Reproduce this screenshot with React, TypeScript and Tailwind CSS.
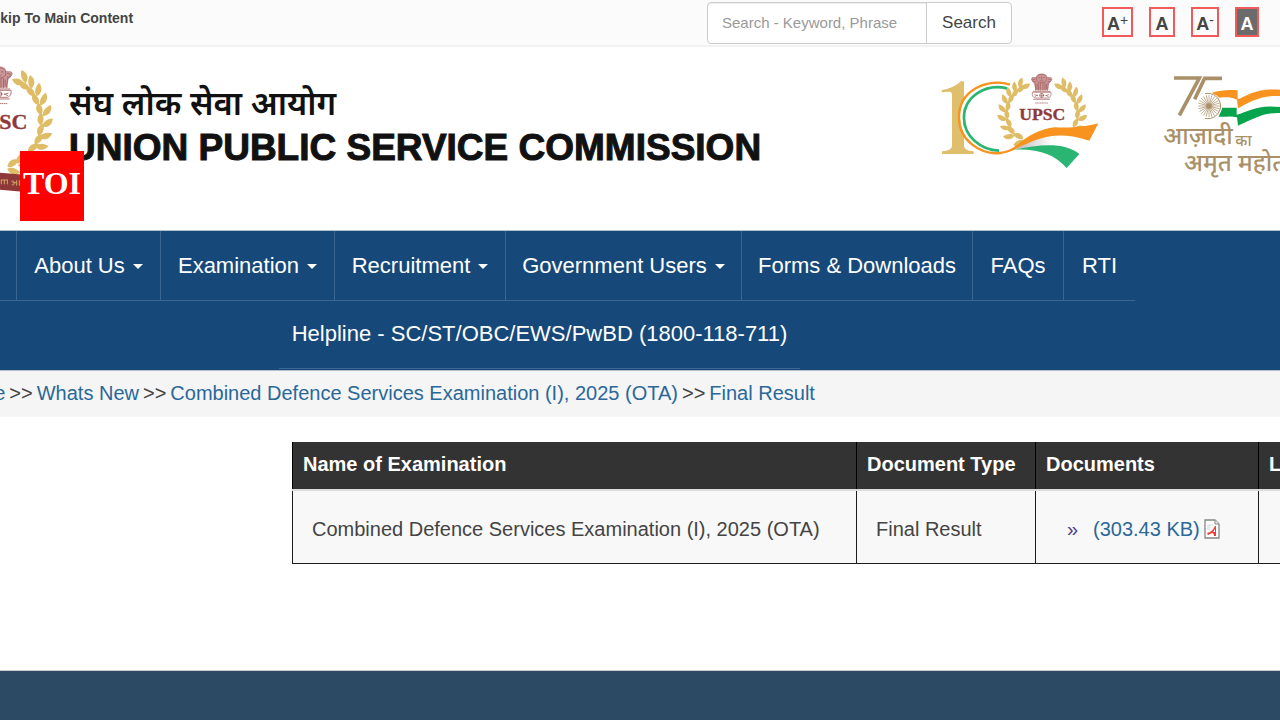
const navItems = [
  { label: "About Us", menu: true, width: "w-36" },
  { label: "Examination", menu: true, width: "w-[174px]" },
  { label: "Recruitment", menu: true, width: "w-[171px]" },
  { label: "Government Users", menu: true, width: "w-[236px]" },
  { label: "Forms & Downloads", menu: false, width: "w-[231px]" },
  { label: "FAQs", menu: false, width: "w-[91px]" },
  { label: "RTI", menu: false, width: "w-[72px]" },
];

// x, y, rotation of each pair of leaves
const mainLeaves = [
  [64, 74, -42],
  [83, 88, -28],
  [103, 108, -14],
  [118, 134, 0],
  [129, 166, 14],
  [131, 199, 30],
  [128, 234, 48],
  [119, 264, 66],
  [99, 290, 80],
  [66, 320, 60],
  [38, 336, 84],
];

const centenaryLeaves = [
  [424, 90, -36],
  [440, 100, -18],
  [457, 114, -8],
  [469, 133, 4],
  [477, 158, 20],
  [479, 184, 38],
  [471, 211, 54],
];

const centenaryLeavesLower = [
  [462, 235, 72],
  [436, 253, 92],
];

function Leaves({ items, size }: { items: number[][]; size: number }) {
  return (
    <g fill="#dfbd67">
      {items.map(([x, y, angle]) => (
        <g
          key={`${x}-${y}`}
          transform={`translate(${x} ${y}) rotate(${angle}) scale(${size})`}
        >
          <path d="M-1 11 C-16 8 -18 -4 -14 -14 C-5 -10 2 -2 -1 11Z" />
          <path d="M2 12 C-1 0 5 -9 14 -15 C20 -3 15 9 2 12Z" />
        </g>
      ))}
    </g>
  );
}

function Lions() {
  return (
    <g fill="none" stroke="#a25b5b" strokeWidth="2" strokeLinecap="round">
      <path
        d="M-16 4 C-15 -9 15 -9 16 4 L28 6 C33 14 26 22 22 25 L19 45 H-19 L-22 25 C-28 20 -33 13 -28 6Z"
        fill="#c99797"
        stroke="none"
      />
      <path d="M-13 2 C-10 -5 10 -5 13 2 M-15 5 C-18 18 -8 22 0 22 C8 22 18 18 15 5 M-8 7 h3 M5 7 h3 M0 5 v7 M-5 15 C-2 18 2 18 5 15" />
      <path d="M-28 7 C-35 12 -27 22 -19 19 M28 7 C35 12 27 22 19 19 M-27 13 l7 -2 M27 13 l-7 -2 M-20 22 C-20 30 -17 36 -18 45 M20 22 C20 30 17 36 18 45" />
      <path d="M-10 23 C-12 30 -8 36 -10 45 M10 23 C12 30 8 36 10 45 M-4 24 V45 M4 24 V45 M-14 27 v14 M14 27 v14" />
      <path d="M-25 48 H25 M-28 52 C-30 61 -25 66 -20 68 H20 C25 66 30 61 28 52Z M-24 72 H24" />
      <circle cx="0" cy="60" r="6" />
      <path d="M-6 60 H6 M0 54 V66 M-21 58 l9 3 M-20 64 l7 -5 M12 61 l9 -3 M13 60 l7 4" />
      <path d="M-19 83 H19" strokeDasharray="2 3" />
    </g>
  );
}

function MainEmblem() {
  return (
    <svg
      className="mt-2 h-[150px] w-[53px] shrink-0"
      viewBox="0 0 159 450"
      aria-hidden="true"
    >
      <g transform="translate(-2 42) scale(1.25)">
        <Lions />
      </g>
      <Leaves items={mainLeaves} size={1.4} />
      <text
        x="82"
        y="223"
        textAnchor="end"
        fontFamily="Liberation Serif, serif"
        fontWeight="700"
        fontSize="66"
        fill="#8d3939"
        stroke="#8d3939"
      >
        UPSC
      </text>
      <path d="M0 353 L110 362 V414 L0 404Z" fill="#8d3939" />
      <path
        d="M2 375 h22 M4 375 v13 M13 375 v13 M22 375 v13 M34 379 c8 -4 10 3 4 4 c8 0 6 9 -3 6 M42 383 h8 M50 376 v16 M58 376 v16"
        fill="none"
        stroke="#d6a663"
        strokeWidth="3"
      />
    </svg>
  );
}

function CentenaryLogo() {
  return (
    <svg
      className="h-[130px] w-[200px]"
      viewBox="0 0 600 390"
      role="img"
      aria-label="UPSC 100"
    >
      <defs>
        <linearGradient id="fold" x1="0" x2="1">
          <stop offset="0" stopColor="#b9b9b9" />
          <stop offset="0.5" stopColor="#ffffff" />
        </linearGradient>
      </defs>
      <path
        d="M132 79 V272 Q132 286 161 289 V297 H66 V289 Q96 286 96 272 V119 Q96 109 86 110 L65 112 V105 C90 102 110 91 122 79Z"
        fill="#dfbf6b"
      />
      <Leaves items={centenaryLeaves} size={1.1} />
      <g transform="translate(733 0) scale(-1 1)">
        <Leaves items={centenaryLeaves} size={1.1} />
        <Leaves items={centenaryLeavesLower} size={1.2} />
      </g>
      <g transform="translate(365 61)">
        <Lions />
      </g>
      <text
        x="367"
        y="195"
        textAnchor="middle"
        fontFamily="Liberation Serif, serif"
        fontWeight="700"
        fontSize="53"
        fill="#8d3939"
        stroke="#8d3939"
      >
        UPSC
      </text>
      <path
        d="M266 94 C201 76 124 105 124 188 C124 250 182 293 239 290"
        fill="none"
        stroke="#ffffff"
        strokeWidth="8"
      />
      <path
        d="M270 89 C205 67 116 105 117 188 C117 255 180 300 240 294 C267 291 282 281 310 265"
        fill="none"
        stroke="#f7931e"
        strokeWidth="7"
      />
      <path
        d="M261 100 C197 84 132 125 132 188 C132 245 183 285 237 287"
        fill="none"
        stroke="#2bb573"
        strokeWidth="8"
      />
      <path d="M285 284 Q350 235 430 239 L508 256 L480 286 Q400 262 285 284Z" fill="url(#fold)" />
      <path
        d="M270 288 C310 252 350 222 405 217 C455 220 500 214 535 205 L508 257 C465 243 425 238 390 244 C345 252 315 270 270 288Z"
        fill="#f7931e"
      />
      <path
        d="M283 284 C350 270 432 258 478 297 L440 339 C405 300 360 281 283 284Z"
        fill="#2bb573"
      />
    </svg>
  );
}

function AmritLogo() {
  const spokes = Array.from({ length: 24 }, (_, i) => i * 15);
  return (
    <svg
      className="mt-[5px] h-[130px] w-[140px]"
      viewBox="0 0 420 390"
      role="img"
      aria-label="आज़ादी का अमृत महोत्सव"
    >
      <path
        d="M102 54 H178 L118 166 M246 55 H194 L164 118"
        fill="none"
        stroke="#a99068"
        strokeWidth="11"
      />
      <path
        d="M216 98 C242 90 268 88 293 91 V118 C326 105 348 84 420 89 V108 C360 105 325 129 294 145 L291 119 C268 108 246 112 228 115Z"
        fill="#f7931e"
      />
      <path
        d="M247 143 H290 V164 C326 155 350 133 420 141 V159 C365 157 328 184 294 197 L291 172 C270 166 253 172 236 170Z"
        fill="#07a44b"
      />
      <circle cx="207" cy="138" r="39" fill="#ffffff" />
      <path
        d="M195 101 A38 38 0 1 1 195 175"
        fill="none"
        stroke="#a99068"
        strokeWidth="3"
      />
      <g stroke="#a99068" strokeWidth="2">
        {spokes.map((angle) => (
          <path key={angle} d="M207 134 V105" transform={`rotate(${angle} 207 138)`} />
        ))}
      </g>
      <circle cx="207" cy="138" r="8" fill="#a99068" />
      <g fill="#a99068" fontFamily="Noto Sans, sans-serif" fontWeight="500">
        <text x="70" y="252" fontSize="72">आज़ादी</text>
        <text x="286" y="259" fontSize="46">का</text>
        <text x="132" y="332" fontSize="72">अमृत महोत्सव</text>
      </g>
    </svg>
  );
}

function PdfIcon() {
  return (
    <svg className="size-5 shrink-0" viewBox="0 0 20 20" aria-hidden="true">
      <path d="M1 1 H11 L15 5 V19 H1Z" fill="#fff" stroke="#858585" strokeWidth="1.3" />
      <path d="M11 1 V5 H15" fill="#eee" stroke="#858585" />
      <path d="M3 6 h6 M3 8 h4 M3 10 h3" stroke="#d5d5d5" />
      <path
        d="M3 14 L6 13 C9 11 10 9 11 7 L12 7 V17 L10 17 C10 15 9 14 8 14 L4 16Z"
        fill="#ef3b3b"
      />
      <path d="M9 13 L11 10 V13Z" fill="#fff" />
    </svg>
  );
}

function TopBar() {
  const sizeButton =
    "flex h-[30px] justify-center border-2 border-[#f05a5a] pt-px text-lg leading-7 font-bold";
  return (
    <div className="flex h-[47px] items-start justify-between border-b-2 border-[#f2f2f2] bg-[#fbfbfb]">
      <a href="#content" className="-ml-[9px] pt-2 text-sm leading-5 font-bold whitespace-nowrap">
        Skip To Main Content
      </a>
      <div className="flex pr-[21px]">
        <form className="mt-0.5 mr-[90px] flex h-[42px] rounded border border-[#ccc] bg-white">
          <input
            type="text"
            aria-label="Search"
            placeholder="Search - Keyword, Phrase"
            className="w-[218px] rounded-l pl-3.5 text-[15px] shadow-[inset_0_1px_1px_#00000013] outline-none placeholder:text-[#999]"
          />
          <button
            type="button"
            className="w-[85px] border-l border-[#ccc] text-[17px]"
          >
            Search
          </button>
        </form>
        <div className="flex items-start gap-4 pt-[7px]">
          <button type="button" className={`w-[31px] ${sizeButton}`}>
            A<span className="text-sm leading-5 font-normal">+</span>
          </button>
          <button type="button" className={`w-[26px] ${sizeButton}`}>
            A
          </button>
          <button type="button" className={`w-7 ${sizeButton}`}>
            A<span className="text-sm leading-5 font-normal">-</span>
          </button>
          <button type="button" className={`w-6 bg-[#6b6b6b] text-white ${sizeButton}`}>
            A
          </button>
        </div>
      </div>
    </div>
  );
}

function Header() {
  return (
    <header className="relative flex h-[183px] items-start">
      <MainEmblem />
      <div className="ml-4 pt-[34px] whitespace-nowrap text-[#111]">
        <p className="font-['Noto_Sans',sans-serif] text-[33px] leading-[44px] font-semibold">
          संघ लोक सेवा आयोग
        </p>
        <h1 className="text-[37px] leading-[46px] font-bold [-webkit-text-stroke:1px_#111]">
          UNION PUBLIC SERVICE COMMISSION
        </h1>
      </div>
      <div className="ml-auto flex gap-5 pt-2">
        <CentenaryLogo />
        <AmritLogo />
      </div>
      <div className="absolute top-[104px] left-5 flex h-[70px] w-16 items-center justify-center bg-[#ff0000] pb-1.5 font-['Liberation_Serif',serif] text-[32px] font-bold text-white">
        TOI
      </div>
    </header>
  );
}

function Nav() {
  return (
    <nav className="h-[141px] border-y border-[#b5bfca] bg-[#16497a] text-[22px] leading-8 text-white">
      <ul className="flex h-[70px]">
        <li className="w-4 border-b border-[#3b6691]"></li>
        {navItems.map((item) => (
          <li key={item.label} className={`shrink-0 border-b border-l border-[#3b6691] ${item.width}`}>
            <a href="#" className="flex items-center justify-center gap-2 pt-[19px] whitespace-nowrap">
              {item.label}
              {item.menu && (
                <span className="border-x-5 border-t-5 border-x-transparent border-t-white"></span>
              )}
            </a>
          </li>
        ))}
      </ul>
      <a
        href="#"
        className="ml-[279px] block h-[68px] w-[521px] border-b border-[#3b6691] pt-[17px] text-center whitespace-nowrap"
      >
        Helpline - SC/ST/OBC/EWS/PwBD (1800-118-711)
      </a>
    </nav>
  );
}

function Breadcrumb() {
  const link = "text-[#2a6899]";
  return (
    <div className="h-[46px] bg-[#f5f5f5]">
      <div className="-ml-12 flex gap-1 pt-1.5 text-xl leading-8 whitespace-nowrap">
        <a href="#" className={link}>Home</a>
        <span>&gt;&gt;</span>
        <a href="#" className={link}>Whats New</a>
        <span>&gt;&gt;</span>
        <a href="#" className={link}>Combined Defence Services Examination (I), 2025 (OTA)</a>
        <span>&gt;&gt;</span>
        <a href="#" className={link}>Final Result</a>
      </div>
    </div>
  );
}

function ResultTable() {
  const head = "h-12 border-x border-black pb-1 pl-2.5 text-left font-bold";
  const cell = "h-[73px] border border-t-2 border-[#1c1c1c] border-t-[#ddd] pt-1 pl-[19px]";
  return (
    <table className="mt-[25px] ml-[292px] w-[1190px] table-fixed border-collapse text-xl leading-7 whitespace-nowrap">
      <colgroup>
        <col className="w-[564px]" />
        <col className="w-[179px]" />
        <col className="w-[223px]" />
        <col />
      </colgroup>
      <thead className="bg-[#333] text-white">
        <tr>
          <th className={head}>Name of Examination</th>
          <th className={head}>Document Type</th>
          <th className={head}>Documents</th>
          <th className={head}>L</th>
        </tr>
      </thead>
      <tbody className="bg-[#f8f8f8]">
        <tr>
          <td className={cell}>Combined Defence Services Examination (I), 2025 (OTA)</td>
          <td className={cell}>Final Result</td>
          <td className={cell}>
            <div className="flex items-center pl-3">
              <span className="w-[26px] text-[#4b3c86]">»</span>
              <a href="#" className="flex items-center gap-1 text-[#2a6899]">
                (303.43 KB)
                <PdfIcon />
              </a>
            </div>
          </td>
          <td className={cell}></td>
        </tr>
      </tbody>
    </table>
  );
}

export default function App() {
  return (
    <div className="flex min-h-screen flex-col overflow-hidden bg-white font-['Liberation_Sans',Arial,sans-serif] text-[#444]">
      <TopBar />
      <Header />
      <Nav />
      <Breadcrumb />
      <main id="content" className="pb-[106px]">
        <ResultTable />
      </main>
      <footer className="grow border-t border-[#ccc] bg-[#2c4a64]"></footer>
    </div>
  );
}
